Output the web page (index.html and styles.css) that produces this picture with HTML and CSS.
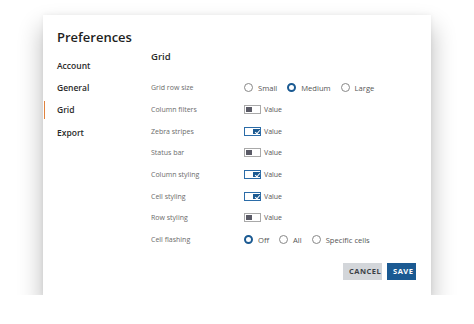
FILE: index.html
```
<!DOCTYPE html>
<html lang="en">

<head>
    <meta charset="UTF-8">
    <title>Preferences</title>
    <link rel="stylesheet" href="styles.css">
</head>

<body>
    <div class="dialog">
        <h2 class="dialog-title">Preferences</h2>
        <div class="dialog-body">
            <ul class="nav">
                <li class="nav-item">Account</li>
                <li class="nav-item">General</li>
                <li class="nav-item active">Grid</li>
                <li class="nav-item">Export</li>
            </ul>
            <div class="panel">
                <h3 class="panel-title">Grid</h3>
                <div class="row">
                    <span class="label">Grid row size</span>
                    <div class="radios">
                        <span class="radio"><span class="dot"></span>Small</span>
                        <span class="radio"><span class="dot on"></span>Medium</span>
                        <span class="radio"><span class="dot"></span>Large</span>
                    </div>
                </div>
                <div class="row">
                    <span class="label">Column filters</span>
                    <span class="toggle"><span class="switch"></span>Value</span>
                </div>
                <div class="row">
                    <span class="label">Zebra stripes</span>
                    <span class="toggle"><span class="switch on"></span>Value</span>
                </div>
                <div class="row">
                    <span class="label">Status bar</span>
                    <span class="toggle"><span class="switch"></span>Value</span>
                </div>
                <div class="row">
                    <span class="label">Column styling</span>
                    <span class="toggle"><span class="switch on"></span>Value</span>
                </div>
                <div class="row">
                    <span class="label">Cell styling</span>
                    <span class="toggle"><span class="switch on"></span>Value</span>
                </div>
                <div class="row">
                    <span class="label">Row styling</span>
                    <span class="toggle"><span class="switch"></span>Value</span>
                </div>
                <div class="row">
                    <span class="label">Cell flashing</span>
                    <div class="radios">
                        <span class="radio"><span class="dot on"></span>Off</span>
                        <span class="radio"><span class="dot"></span>All</span>
                        <span class="radio"><span class="dot"></span>Specific cells</span>
                    </div>
                </div>
            </div>
        </div>
        <div class="footer">
            <button class="btn cancel">CANCEL</button>
            <button class="btn save">SAVE</button>
        </div>
    </div>
</body>

</html>
```

FILE: styles.css
```
* {
    margin: 0;
    padding: 0;
    box-sizing: border-box;
}

body {
    font-family: 'Open Sans', sans-serif;
    background-color: #FFFFFF;
    color: #222;
}

.dialog {
    width: 388px;
    height: 280px;
    margin: 15px 0 0 43px;
    background-color: #FFFFFF;
    padding: 0 15px 0 14px;
    box-shadow: 0 14px 22px 2px rgba(0, 0, 0, 0.24), 0 0 5px rgba(0, 0, 0, 0.06);
    display: flex;
    flex-direction: column;
}

.dialog-title {
    font-size: 13px;
    font-weight: 600;
    line-height: 18px;
    margin-top: 13px;
    color: #1e1e1e;
}

.dialog-body {
    display: flex;
    flex-direction: row;
}

.nav {
    list-style: none;
    width: 94px;
    padding-top: 8.5px;
}

.nav-item {
    font-size: 8.5px;
    font-weight: 600;
    line-height: 22.4px;
    color: #2a2a2a;
    position: relative;
}

.nav-item.active::before {
    content: '';
    position: absolute;
    left: -13px;
    top: 2px;
    width: 1px;
    height: 18px;
    background-color: #E0823E;
}

.panel {
    flex-grow: 1;
}

.panel-title {
    font-size: 9.5px;
    font-weight: 600;
    line-height: 16px;
    margin-top: 3px;
    margin-bottom: 12px;
    color: #2a2a2a;
}

.row {
    display: flex;
    align-items: center;
    height: 21.7px;
}

.label {
    width: 93px;
    font-size: 7px;
    color: #6b6b6b;
}

.radios {
    display: flex;
    align-items: center;
    gap: 10px;
}

.radio {
    display: flex;
    align-items: center;
    gap: 5px;
    font-size: 7.6px;
    color: #555;
}

.dot {
    width: 9px;
    height: 9px;
    border-radius: 50%;
    border: 1px solid #888;
    background-color: #FFFFFF;
}

.dot.on {
    border: 2.5px solid #1B5A92;
}

.toggle {
    display: flex;
    align-items: center;
    gap: 3px;
    font-size: 7px;
    color: #555;
}

.switch {
    width: 17px;
    height: 9px;
    border: 1px solid #A9A9A9;
    background-color: #FFFFFF;
    position: relative;
}

.switch::before {
    content: '';
    position: absolute;
    left: 1px;
    top: 1px;
    width: 6px;
    height: 5px;
    background-color: #5a5a66;
}

.switch.on {
    border-color: #2B6CA8;
}

.switch.on::before {
    left: 8px;
    width: 7px;
    background-color: #1B5A92;
}

.switch.on::after {
    content: '';
    position: absolute;
    left: 10.5px;
    top: 1px;
    width: 2px;
    height: 4px;
    border-right: 1.2px solid #FFFFFF;
    border-bottom: 1.2px solid #FFFFFF;
    transform: rotate(40deg);
}

.footer {
    display: flex;
    justify-content: flex-end;
    gap: 5px;
    margin-top: 12px;
}

.btn {
    font-family: 'Open Sans', sans-serif;
    font-size: 7.5px;
    font-weight: 700;
    letter-spacing: 0.5px;
    height: 17px;
    border: none;
    padding: 0 6px;
}

.cancel {
    width: 39px;
    background-color: #D3D6DA;
    color: #3b3f45;
}

.save {
    width: 29px;
    background-color: #1B5A92;
    color: #FFFFFF;
}
```
